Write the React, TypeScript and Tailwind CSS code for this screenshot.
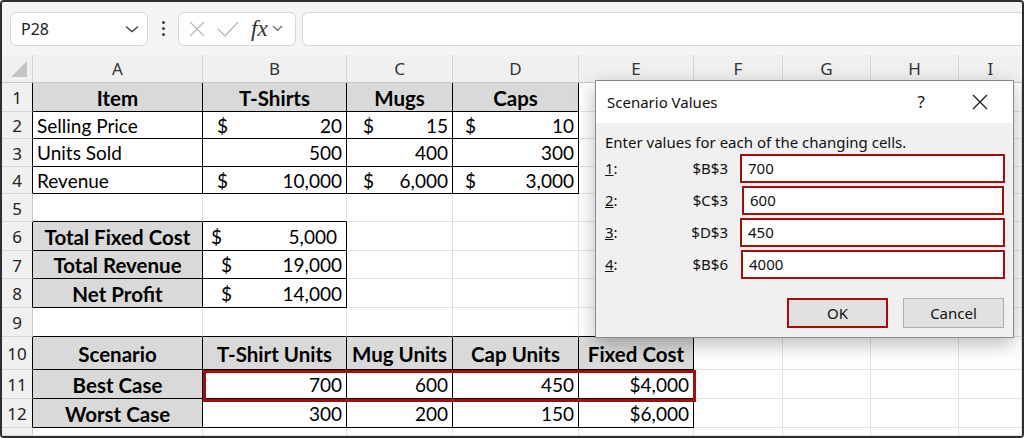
import React from 'react'

// Excel sheet with the "Scenario Values" dialog on top

type Cell = {
  v?: string
  d?: string
  dCls?: string
  vCls?: string
  align?: 'left' | 'center' | 'right'
  head?: boolean
}

const COLS = ['A', 'B', 'C', 'D', 'E', 'F', 'G', 'H', 'I']
const ROW_H = ['h-[29px]', 'h-[27px]', 'h-[28px]', 'h-[27px]', 'h-[28px]', 'h-[29px]', 'h-[28px]', 'h-[29px]', 'h-[29px]', 'h-[33px]', 'h-[29px]', 'h-[29px]', 'h-[8px]']
const COL_W = ['w-[170px]', 'w-[144px]', 'w-[106px]', 'w-[126px]', 'w-[115px]', 'w-[89px]', 'w-[88px]', 'w-[88px]', 'flex-1']

const H = (v: string): Cell => ({ v, align: 'center', head: true })
const R = (v: string): Cell => ({ v, align: 'right' })

const DATA: Cell[][] = [
  [H('Item'), H('T-Shirts'), H('Mugs'), H('Caps')],
  [{ v: 'Selling Price' }, { d: '$', v: '20', dCls: 'pl-[14px]' }, { d: '$', v: '15', dCls: 'pl-[16px]' }, { d: '$', v: '10', dCls: 'pl-[12px]' }],
  [{ v: 'Units Sold' }, R('500'), R('400'), R('300')],
  [{ v: 'Revenue' }, { d: '$', v: '10,000', dCls: 'pl-[14px]' }, { d: '$', v: '6,000', dCls: 'pl-[16px]' }, { d: '$', v: '3,000', dCls: 'pl-[12px]' }],
  [],
  [H('Total Fixed Cost'), { d: '$', v: '5,000', dCls: 'pl-[8px]', vCls: 'pr-[9px]' }],
  [H('Total Revenue'), { d: '$', v: '19,000', dCls: 'pl-[18px]' }],
  [H('Net Profit'), { d: '$', v: '14,000', dCls: 'pl-[18px]' }],
  [],
  [H('Scenario'), H('T-Shirt Units'), H('Mug Units'), H('Cap Units'), H('Fixed Cost')],
  [H('Best Case'), R('700'), R('600'), R('450'), R('$4,000')],
  [H('Worst Case'), R('300'), R('200'), R('150'), R('$6,000')],
  [],
]

function inTable(r: number, c: number) {
  // r: 1-based row, c: 1-based column (A = 1)
  if (r >= 1 && r <= 4 && c >= 1 && c <= 4) return true
  if (r >= 6 && r <= 8 && c >= 1 && c <= 2) return true
  if (r >= 10 && r <= 12 && c >= 1 && c <= 5) return true
  return false
}

function GridCell({ r, c }: { r: number; c: number }) {
  const cell = DATA[r - 1][c - 1] || {}
  const right = inTable(r, c) || inTable(r, c + 1) ? 'border-r-black' : 'border-r-[#e1e1e1]'
  const bottom = inTable(r, c) || inTable(r + 1, c) ? 'border-b-black' : 'border-b-[#e1e1e1]'
  const bg = cell.head ? 'bg-[#d9d9d9]' : 'bg-white'
  const just = cell.align === 'center' ? 'justify-center' : cell.align === 'right' ? 'justify-end pr-[4px]' : 'justify-start pl-[4px]'
  return (
    <div className={`${COL_W[c - 1]} h-full shrink-0 border-r border-b ${right} ${bottom} ${bg} flex items-center pt-[2px] overflow-hidden whitespace-nowrap`}>
      {cell.d ? (
        <div className="flex w-full items-center justify-between">
          <span className={cell.dCls}>{cell.d}</span>
          <span className={cell.vCls || 'pr-[4px]'}>{cell.v}</span>
        </div>
      ) : (
        <div className={`flex w-full ${just} ${cell.head ? 'font-bold text-[20.5px]' : ''}`}>{cell.v}</div>
      )}
    </div>
  )
}

function Toolbar() {
  return (
    <div className="h-[53px] bg-[#f5f5f5] flex items-center pl-[8px]">
      <div className="w-[138px] h-[34px] bg-white border border-[#d6d6d6] rounded-[6px] flex items-center justify-between pl-[10px] pr-[8px] text-[16px] text-[#222]">
        <span>P28</span>
        <svg width="14" height="8" viewBox="0 0 14 8"><path d="M1 1.5 L7 6.5 L13 1.5" fill="none" stroke="#444" strokeWidth="1.4" /></svg>
      </div>
      <div className="w-[30px] flex flex-col items-center gap-[3px]">
        <span className="w-[3px] h-[3px] rounded-full bg-[#444]" />
        <span className="w-[3px] h-[3px] rounded-full bg-[#444]" />
        <span className="w-[3px] h-[3px] rounded-full bg-[#444]" />
      </div>
      <div className="w-[118px] h-[34px] bg-white border border-[#d6d6d6] rounded-[6px] flex items-center pl-[10px] gap-[12px]">
        <svg width="16" height="16" viewBox="0 0 16 16"><path d="M1 1 L15 15 M15 1 L1 15" stroke="#b8b8b8" strokeWidth="1.3" /></svg>
        <svg width="22" height="16" viewBox="0 0 22 16"><path d="M1 8 L8 15 L21 1" fill="none" stroke="#b8b8b8" strokeWidth="1.3" /></svg>
        <div className="flex items-center gap-[4px]">
          <span className="font-['Liberation_Serif'] italic text-[23px] text-[#333] leading-none">fx</span>
          <svg width="11" height="7" viewBox="0 0 11 7"><path d="M1 1 L5.5 5.5 L10 1" fill="none" stroke="#666" strokeWidth="1.2" /></svg>
        </div>
      </div>
      <div className="flex-1 ml-[6px] h-[34px] bg-white border-y border-l border-[#d6d6d6] rounded-l-[6px]" />
    </div>
  )
}

function SheetGrid() {
  return (
    <div className="flex flex-col">
      <div className="h-[28px] flex bg-[#f0f0f0] border-b border-[#c8c8c8]">
        <div className="w-[31px] shrink-0 h-full border-r border-[#d0d0d0] flex items-end justify-end pr-[5px] pb-[5px]">
          <svg width="16" height="16" viewBox="0 0 16 16"><path d="M16 0 L16 16 L0 16 Z" fill="#c4c4c4" /></svg>
        </div>
        {COLS.map((col, i) => (
          <div key={col} className={`${COL_W[i]} shrink-0 h-full flex items-end pb-[3px] justify-center text-[17px] text-[#333] ${i < 8 ? 'border-r border-[#d6d6d6]' : ''}`}>
            <span className="leading-[20px] pt-[5px]">{col}</span>
          </div>
        ))}
      </div>
      {ROW_H.map((h, ri) => {
        const r = ri + 1
        const hdrRight = inTable(r, 1) ? 'border-r-black' : 'border-r-[#c8c8c8]'
        return (
          <div key={r} className={`${h} flex`}>
            <div className={`w-[31px] shrink-0 h-full bg-[#f0f0f0] border-r border-b border-b-[#d6d6d6] ${hdrRight} flex items-center justify-center pt-[2px] text-[17px] text-[#222]`}>
              {r <= 12 ? r : ''}
            </div>
            <div className="flex-1 flex font-['Lato','Liberation_Sans',sans-serif] text-[19px] text-black">
              {COLS.map((_, ci) => (
                <GridCell key={ci} r={r} c={ci + 1} />
              ))}
            </div>
          </div>
        )
      })}
    </div>
  )
}

function BestCaseMark() {
  // red annotation around B11:E11
  return <div className="absolute left-[201px] top-[368px] w-[493px] h-[32px] border-[3px] border-[#a50d0d] pointer-events-none" />
}

function ValueRow({ n, addr, value, box }: { n: string; addr: string; value: string; box: string }) {
  return (
    <div className="flex items-center h-[29px]">
      <span className="w-[24px]"><span className="underline">{n}</span>:</span>
      <span className="w-[99px] text-right">{addr}</span>
      <div className={`h-full bg-white border-2 border-[#a50d0d] flex items-center pl-[6px] text-[15px] ${box}`}>{value}</div>
    </div>
  )
}

function ScenarioDialog() {
  return (
    <div className="absolute left-[593px] top-[78px] w-[419px] h-[258px] bg-[#f0f0f0] border border-[#8a8a8a] shadow-[0_6px_18px_rgba(0,0,0,0.28)] flex flex-col font-['Noto_Sans','Open_Sans',sans-serif] text-[15px] text-[#111]">
      <div className="h-[42px] bg-white flex items-center pl-[11px] pr-[25px] text-[15px]">
        <span className="flex-1">Scenario Values</span>
        <span className="mr-[47px] text-[17px]">?</span>
        <svg width="16" height="16" viewBox="0 0 16 16"><path d="M1 1 L15 15 M15 1 L1 15" stroke="#222" strokeWidth="1.4" /></svg>
      </div>
      <div className="flex-1 pl-[9px] pt-[8px]">
        <div className="h-[22px] leading-[22px]">Enter values for each of the changing cells.</div>
        <div className="flex flex-col gap-[3px] mt-[1px]">
          <ValueRow n="1" addr="$B$3" value="700" box="ml-[12px] w-[265px]" />
          <ValueRow n="2" addr="$C$3" value="600" box="ml-[14px] w-[262px]" />
          <ValueRow n="3" addr="$D$3" value="450" box="ml-[12px] w-[265px]" />
          <ValueRow n="4" addr="$B$6" value="4000" box="ml-[13px] w-[264px]" />
        </div>
        <div className="flex justify-end gap-[15px] pr-[9px] mt-[19px]">
          <div className="w-[101px] h-[30px] bg-[#e1e1e1] border-2 border-[#a50d0d] flex items-center justify-center">OK</div>
          <div className="w-[101px] h-[30px] bg-[#e1e1e1] border border-[#adadad] flex items-center justify-center">Cancel</div>
        </div>
      </div>
    </div>
  )
}

export default function App() {
  return (
    <div className="w-[1024px] h-[438px] bg-white border-2 border-[#2e2e2e] rounded-[4px] overflow-hidden relative font-['Noto_Sans','Liberation_Sans',sans-serif]">
      <Toolbar />
      <SheetGrid />
      <BestCaseMark />
      <ScenarioDialog />
    </div>
  )
}
